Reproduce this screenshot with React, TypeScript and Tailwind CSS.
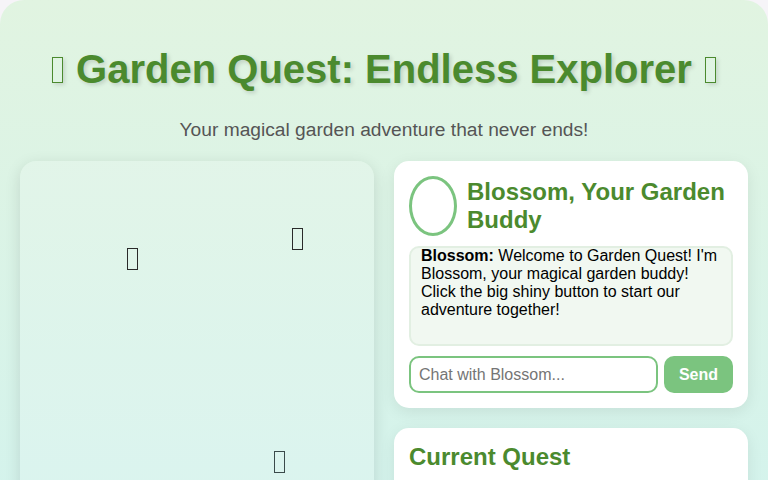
import React from "react";

function Tofu({ className }: { className: string }) {
  return <span aria-hidden="true" className={className} />;
}

export default function App() {
  return (
    <div className="min-h-screen bg-[#f6f4f8]" style={{ fontFamily: '"Liberation Sans", Arial, sans-serif' }}>
      <div className="min-h-[480px] rounded-[24px] bg-gradient-to-b from-[#e1f4e1] to-[#d2f3ee] px-5 pb-5">
        <header className="text-center">
          <h1 className="whitespace-nowrap pt-[46px] text-[40px] font-bold leading-[46px] text-[#4b8a2e] [text-shadow:2px_2px_4px_rgba(0,0,0,0.15)]">
            <Tofu className="mx-[2px] inline-block h-[26px] w-[11px] border-[1.5px] border-[#4b8a2e] shadow-[2px_2px_4px_rgba(0,0,0,0.12)]" /> Garden Quest: Endless Explorer{" "}
            <Tofu className="mx-[2px] inline-block h-[26px] w-[11px] border-[1.5px] border-[#4b8a2e] shadow-[2px_2px_4px_rgba(0,0,0,0.12)]" />
          </h1>
          <p className="mt-[27px] text-[19.2px] leading-[22px] text-[#555]">
            Your magical garden adventure that never ends!
          </p>
        </header>
        <div className="mt-5 grid grid-cols-2 gap-5">
          <div className="relative h-[400px] overflow-hidden rounded-[16px] bg-white/15 shadow-[0_4px_16px_rgba(0,0,0,0.12)]">
            <Tofu className="absolute left-[107px] top-[87px] h-[22px] w-[11px] border-[1.5px] border-[#2a2a2a]" />
            <Tofu className="absolute left-[272px] top-[67px] h-[22px] w-[11px] border-[1.5px] border-[#2a2a2a]" />
            <Tofu className="absolute left-[254px] top-[290px] h-[22px] w-[11px] border-[1.5px] border-[#3a4a4a]" />
          </div>
          <div className="flex flex-col gap-5">
            <div className="rounded-[15px] bg-white p-[15px] shadow-[0_4px_16px_rgba(0,0,0,0.08)]">
              <div className="flex items-center gap-[10px]">
                <div className="h-[60px] w-[48px] shrink-0 rounded-[50%] border-[3px] border-[#7bc47f] bg-white" />
                <h2 className="text-[24px] font-bold leading-[28px] text-[#4b8a2e]">Blossom, Your Garden Buddy</h2>
              </div>
              <div className="mt-[10px] h-[100px] overflow-hidden rounded-[10px] border-2 border-[#e2efe2] bg-[#f1f8f1] px-[10px] text-[16px] leading-[18px] text-black">
                <p className="-mt-[1px]">
                  <strong>Blossom:</strong> Welcome to Garden Quest! I'm Blossom, your magical garden buddy! Click the big shiny button to start our adventure together!
                </p>
              </div>
              <div className="mt-[10px] flex gap-[6px]">
                <input
                  className="h-[37px] min-w-0 flex-1 rounded-[10px] border-2 border-[#7bc47f] px-[8px] text-[16px] text-black outline-none placeholder:text-[#757575]"
                  placeholder="Chat with Blossom..."
                />
                <button className="h-[37px] w-[69px] rounded-[10px] bg-[#7bc47f] text-[16px] font-bold text-white">Send</button>
              </div>
            </div>
            <div className="rounded-[15px] bg-white p-[15px] shadow-[0_4px_16px_rgba(0,0,0,0.08)]">
              <h2 className="text-[24px] font-bold leading-[28px] text-[#4b8a2e]">Current Quest</h2>
              <div className="h-[60px]" />
            </div>
          </div>
        </div>
      </div>
    </div>
  );
}
